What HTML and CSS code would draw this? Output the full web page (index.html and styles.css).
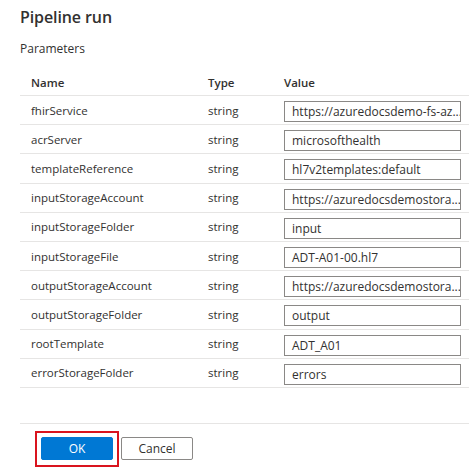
FILE: index.html
```html
<!DOCTYPE html>
<html lang="en">
<head>
<meta charset="utf-8">
<title>Pipeline run</title>
<link rel="stylesheet" href="styles.css">
</head>
<body>
<div class="panel">
  <h1 class="title">Pipeline run</h1>
  <div class="section-label">Parameters</div>
  <div class="params">
    <div class="row head">
      <div class="cell">Name</div>
      <div class="cell">Type</div>
      <div class="cell">Value</div>
    </div>
    <div class="row"><div class="cell">fhirService</div><div class="cell">string</div><div class="cell"><div class="field">https://azuredocsdemo-fs-az...</div></div></div>
    <div class="row"><div class="cell">acrServer</div><div class="cell">string</div><div class="cell"><div class="field">microsofthealth</div></div></div>
    <div class="row"><div class="cell">templateReference</div><div class="cell">string</div><div class="cell"><div class="field">hl7v2templates:default</div></div></div>
    <div class="row"><div class="cell">inputStorageAccount</div><div class="cell">string</div><div class="cell"><div class="field">https://azuredocsdemostora...</div></div></div>
    <div class="row"><div class="cell">inputStorageFolder</div><div class="cell">string</div><div class="cell"><div class="field">input</div></div></div>
    <div class="row"><div class="cell">inputStorageFile</div><div class="cell">string</div><div class="cell"><div class="field">ADT-A01-00.hl7</div></div></div>
    <div class="row"><div class="cell">outputStorageAccount</div><div class="cell">string</div><div class="cell"><div class="field">https://azuredocsdemostora...</div></div></div>
    <div class="row"><div class="cell">outputStorageFolder</div><div class="cell">string</div><div class="cell"><div class="field">output</div></div></div>
    <div class="row"><div class="cell">rootTemplate</div><div class="cell">string</div><div class="cell"><div class="field">ADT_A01</div></div></div>
    <div class="row"><div class="cell">errorStorageFolder</div><div class="cell">string</div><div class="cell"><div class="field">errors</div></div></div>
  </div>
  <div class="footer">
    <div class="highlight"><button class="btn primary">OK</button></div>
    <button class="btn secondary">Cancel</button>
  </div>
</div>
</body>
</html>
```
FILE: styles.css
```css
html, body {
  margin: 0;
  padding: 0;
  background: #ffffff;
}
body {
  font-family: "Open Sans", "Noto Sans", "Liberation Sans", sans-serif;
  color: #323130;
  font-size: 11.5px;
}
.panel {
  padding: 4px 5px 0 20px;
}
.title {
  margin: 0;
  font-size: 16px;
  font-weight: 600;
  line-height: 26px;
  letter-spacing: -0.1px;
}
.section-label {
  margin-top: 11px;
  font-size: 12px;
  line-height: 16px;
}
.params {
  margin-top: 8px;
}
.row {
  display: grid;
  grid-template-columns: 177px 76px 1fr;
  align-items: center;
  height: 29.2px;
  box-sizing: border-box;
  border-bottom: 1px solid #e6e5e4;
}
.row.head {
  height: 31px;
  padding-top: 4px;
  font-weight: 600;
}
.cell {
  padding-left: 11px;
  white-space: nowrap;
}
.field {
  width: 177px;
  height: 21px;
  box-sizing: border-box;
  border: 1px solid #8a8886;
  padding: 0 7px;
  line-height: 19px;
  font-size: 12px;
  overflow: hidden;
  white-space: nowrap;
  margin-top: 3px;
}
.footer {
  margin-top: 35px;
  border-top: 1px solid #e6e5e4;
  padding: 7px 0 0 15px;
  display: flex;
  align-items: center;
  gap: 2px;
}
.highlight {
  border: 2px solid #d9141e;
  padding: 4px 4px 5px;
  display: flex;
}
.btn {
  font-family: inherit;
  font-size: 12px;
  height: 23px;
  width: 72px;
  box-sizing: border-box;
  margin: 0;
  padding: 0;
  border-radius: 2px;
  cursor: pointer;
}
.btn.primary {
  background: #0078d4;
  color: #ffffff;
  border: 1px solid #0078d4;
}
.btn.secondary {
  background: #ffffff;
  color: #323130;
  border: 1px solid #8a8886;
}
```
